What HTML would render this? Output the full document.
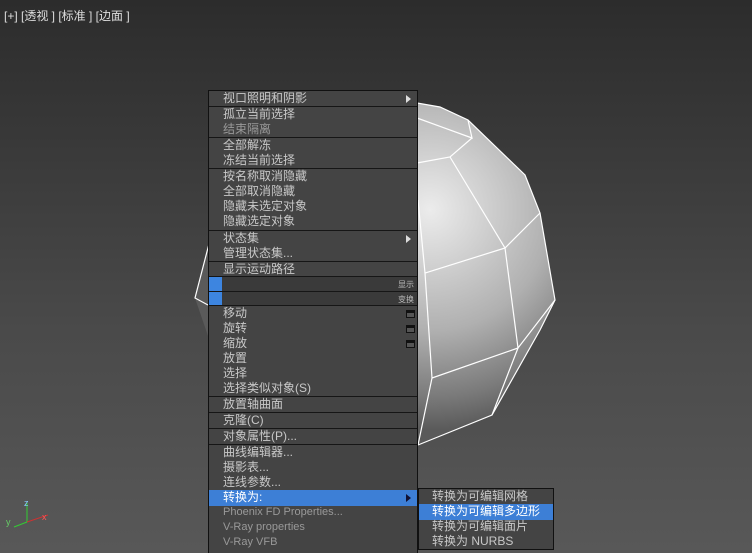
<!DOCTYPE html>
<html><head><meta charset="utf-8"><style>
*{margin:0;padding:0;box-sizing:border-box}
body{width:752px;height:553px;overflow:hidden;background:linear-gradient(#2c2c2c,#4a4a4a 60%,#585858);font-family:"Liberation Sans","Noto Sans CJK SC",sans-serif;position:relative}
.lbl{position:absolute;left:4px;top:7px;color:#ddd;font-size:12px}
.menu{position:absolute;left:208px;top:90px;width:210px;height:463px;background:#444;border:1px solid #111;border-bottom:none}
.it{position:absolute;left:0;width:208px;height:15.5px;color:#c8c8c8;font-size:12px;line-height:15px;padding-left:14px}
.dim{color:#999}
.sep{position:absolute;left:0;width:208px;height:1px;background:#161616}
.arr{position:absolute;right:6px;top:4px;width:0;height:0;border-left:5px solid #ddd;border-top:4px solid transparent;border-bottom:4px solid transparent}
.hl{background:#3d7fd6;color:#fff}
.bar{position:absolute;left:0;width:208px;height:14px;background:#3a3a3a}
.bar i{position:absolute;left:0;top:0;width:13px;height:14px;background:#3d85e0}
.bar b{position:absolute;right:3px;top:2px;font-size:8px;color:#bbb;font-weight:normal}
.bx{position:absolute;right:2px;top:4px;width:9px;height:8px;border:1px solid #111;border-top:3px solid #111;background:#555}
.sub{position:absolute;left:418px;top:488px;width:136px;height:62px;background:#444;border:1px solid #111}
.sub .it{width:134px;padding-left:13px}
</style></head><body>
<svg width="752" height="553" style="position:absolute;left:0;top:0">
<defs><radialGradient id="g" cx="430" cy="210" r="220" gradientUnits="userSpaceOnUse"><stop offset="0" stop-color="#ececec"/><stop offset="0.55" stop-color="#b0b0b0"/><stop offset="0.85" stop-color="#7a7a7a"/><stop offset="1" stop-color="#5a5a5a"/></radialGradient></defs>
<polygon points="417,103 440,107 468,120 525,175 540,213 555,300 540,330 492,415 418,445 300,440 230,400 195,298 210,240 260,150 330,110" fill="url(#g)"/>
<g stroke="#fff" stroke-width="1.2" fill="none">
<polyline points="417,103 440,107 468,120 525,175 540,213 555,300 540,330 492,415 418,445"/>
<polyline points="417,118 472,138 468,120"/>
<polyline points="472,138 450,157 417,163"/>
<polyline points="450,157 505,248 540,213"/>
<polyline points="505,248 425,273 432,378 418,445"/>
<polyline points="418,200 425,273"/>
<polyline points="505,248 518,348 555,300"/>
<polyline points="518,348 432,378"/>
<polyline points="518,348 492,415"/>
<polyline points="210,240 195,298 208,305"/>
</g>
<g font-size="9" font-family="Liberation Sans"><line x1="27" y1="522" x2="27" y2="503" stroke="#3c3" /><line x1="27" y1="522" x2="48" y2="515" stroke="#c33"/><line x1="27" y1="522" x2="14" y2="527" stroke="#3c3"/><text x="24" y="506" fill="#8cf">z</text><text x="42" y="520" fill="#f55">x</text><text x="6" y="525" fill="#6c6">y</text></g>
</svg>
<div class="lbl">[+] [透视 ] [标准 ] [边面 ]</div>
<div class="menu">
<div class="it" style="top:0">视口照明和阴影<span class="arr"></span></div>
<div class="sep" style="top:15px"></div>
<div class="it" style="top:16px">孤立当前选择</div>
<div class="it dim" style="top:31px">结束隔离</div>
<div class="sep" style="top:46px"></div>
<div class="it" style="top:47px">全部解冻</div>
<div class="it" style="top:62px">冻结当前选择</div>
<div class="sep" style="top:77px"></div>
<div class="it" style="top:78px">按名称取消隐藏</div>
<div class="it" style="top:93px">全部取消隐藏</div>
<div class="it" style="top:108px">隐藏未选定对象</div>
<div class="it" style="top:123px">隐藏选定对象</div>
<div class="sep" style="top:139px"></div>
<div class="it" style="top:140px">状态集<span class="arr"></span></div>
<div class="it" style="top:155px">管理状态集...</div>
<div class="sep" style="top:170px"></div>
<div class="it" style="top:171px">显示运动路径</div>
<div class="sep" style="top:185px"></div>
<div class="bar" style="top:186px"><i></i><b>显示</b></div>
<div class="sep" style="top:200px"></div>
<div class="bar" style="top:201px"><i></i><b>变换</b></div>
<div class="sep" style="top:214px"></div>
<div class="it" style="top:215px">移动<span class="bx"></span></div>
<div class="it" style="top:230px">旋转<span class="bx"></span></div>
<div class="it" style="top:245px">缩放<span class="bx"></span></div>
<div class="it" style="top:260px">放置</div>
<div class="it" style="top:275px">选择</div>
<div class="it" style="top:290px">选择类似对象(S)</div>
<div class="sep" style="top:305px"></div>
<div class="it" style="top:306px">放置轴曲面</div>
<div class="sep" style="top:321px"></div>
<div class="it" style="top:322px">克隆(C)</div>
<div class="sep" style="top:337px"></div>
<div class="it" style="top:338px">对象属性(P)...</div>
<div class="sep" style="top:353px"></div>
<div class="it" style="top:354px">曲线编辑器...</div>
<div class="it" style="top:369px">摄影表...</div>
<div class="it" style="top:384px">连线参数...</div>
<div class="it hl" style="top:399px">转换为:<span class="arr" style="border-left-color:#113"></span></div>
<div class="it dim" style="top:414px;font-size:11px">Phoenix FD Properties...</div>
<div class="it dim" style="top:429px;font-size:11px">V-Ray properties</div>
<div class="it dim" style="top:444px;font-size:11px">V-Ray VFB</div>
</div>
<div class="sub">
<div class="it" style="top:0">转换为可编辑网格</div>
<div class="it hl" style="top:15px">转换为可编辑多边形</div>
<div class="it" style="top:30px">转换为可编辑面片</div>
<div class="it" style="top:45px">转换为 NURBS</div>
</div>
</body></html>
